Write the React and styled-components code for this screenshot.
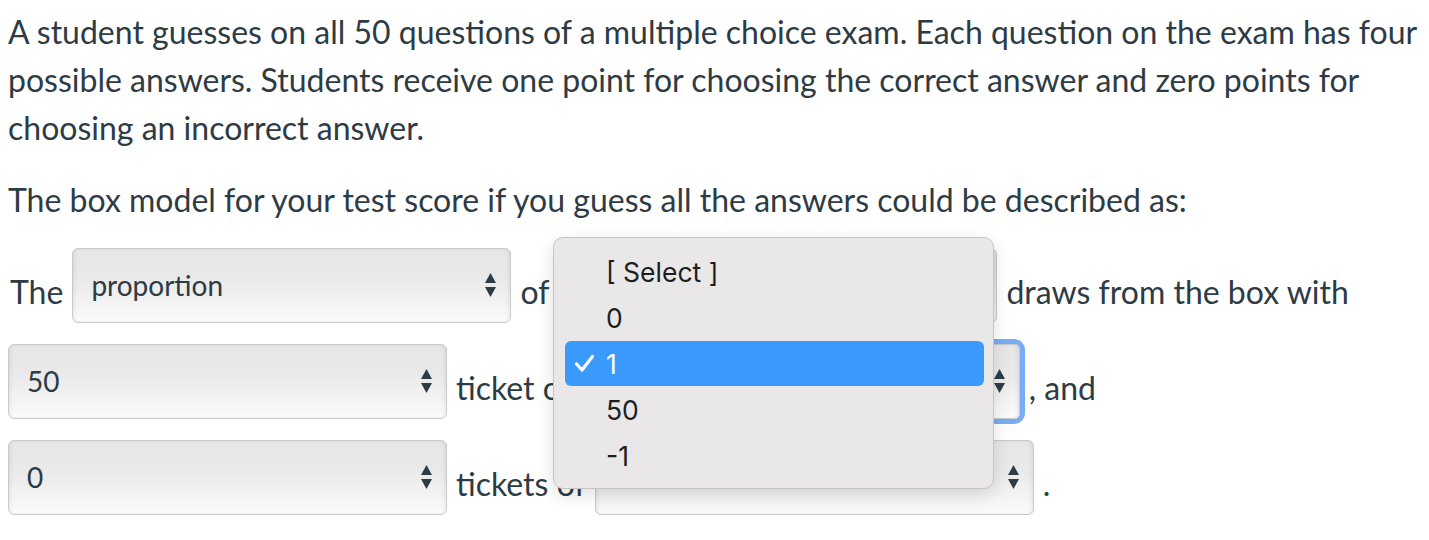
import React from 'react'
import styled, { createGlobalStyle } from 'styled-components'

const GlobalStyle = createGlobalStyle`
    body{
        margin: 8px;
        background: #ffffff;
        font-family: Lato, "Noto Sans", sans-serif;
        color: #2d3b45;
    }
`

const Question = styled.div`
    font-size: 32px;
    line-height: 48px;
    p{
        margin: 0 0 24px 0;
    }
`

const Form = styled.div`
    position: relative;
    display: flex;
    flex-direction: column;
    gap: 21px;
`

const Row = styled.div`
    display: flex;
    align-items: flex-start;
    gap: 9px;
    white-space: nowrap;
`

const Label = styled.span`
    padding-top: 20px;
    margin-left: ${props => props.$offset || 0}px;
`

const SelectBox = styled.div`
    position: relative;
    box-sizing: border-box;
    width: 439px;
    height: 75px;
    padding: 20px 40px 0 18px;
    border: 1px solid #c9c9c9;
    border-radius: 6px;
    background: linear-gradient(#e6e6e6, #eaeaea 45%, #fbfbfb);
    box-shadow: inset 3px 0 4px -2px rgba(0,0,0,0.08), inset -3px 0 4px -2px rgba(0,0,0,0.08);
    font-size: 28px;
    line-height: 32px;
    color: #2d3b45;
    flex-shrink: 0;
    ${props => props.$focused && `
        box-shadow: 0 0 0 5px rgba(96, 158, 245, 0.85), inset -3px 0 4px -2px rgba(0,0,0,0.08);
    `}
    svg{
        position: absolute;
        right: 14px;
        top: 24px;
    }
`

const Arrows = () => (
    <svg width="11" height="24" viewBox="0 0 11 24">
        <polygon points="0,10 5.5,0 11,10" fill="#2d3b45" />
        <polygon points="0,14 11,14 5.5,24" fill="#2d3b45" />
    </svg>
)

const Select = ({ value, focused }) => (
    <SelectBox $focused={focused}>
        {value}
        <Arrows />
    </SelectBox>
)

const Popup = styled.div`
    position: absolute;
    top: -11px;
    left: 545px;
    box-sizing: border-box;
    width: 441px;
    height: 252px;
    padding: 11px 9px 0 11px;
    background: #e9e7e8;
    border: 1px solid #c6c4c5;
    border-radius: 10px;
    box-shadow: 0 6px 18px rgba(0,0,0,0.12);
    font-family: Inter, "Liberation Sans", sans-serif;
    font-size: 26.5px;
    color: #1e1e1e;
`

const Item = styled.div`
    position: relative;
    height: 46px;
    line-height: 46px;
    padding-left: 41px;
    border-radius: 6px;
    ${props => props.$active && `
        background: #3a9afc;
        color: #ffffff;
        height: 45px;
        margin-bottom: 1px;
    `}
    svg{
        position: absolute;
        left: 9px;
        top: 13px;
    }
`

const Check = () => (
    <svg width="21" height="19" viewBox="0 0 21 19">
        <path d="M2.5 10 L8 16 L18.5 2.5" fill="none" stroke="#ffffff" strokeWidth="3.2" strokeLinecap="round" strokeLinejoin="round" />
    </svg>
)

const options = ['[ Select ]', '0', '1', '50', '-1']

const App = () => {
    return (
        <>
            <GlobalStyle />
            <Question>
                <p>A student guesses on all 50 questions of a multiple choice exam. Each question on the exam has four possible answers. Students receive one point for choosing the correct answer and zero points for choosing an incorrect answer.</p>
                <p>The box model for your test score if you guess all the answers could be described as:</p>
                <Form>
                    <Row>
                        <Label $offset={2}>The</Label>
                        <Select value="proportion" />
                        <Label>of</Label>
                        <Select value="" />
                        <Label>draws from the box with</Label>
                    </Row>
                    <Row>
                        <Select value="50" />
                        <Label>ticket of</Label>
                        <Select value="1" focused />
                        <Label>, and</Label>
                    </Row>
                    <Row>
                        <Select value="0" />
                        <Label>tickets of</Label>
                        <Select value="" />
                        <Label>.</Label>
                    </Row>
                    <Popup>
                        {options.map(o => (
                            <Item key={o} $active={o === '1'}>
                                {o === '1' && <Check />}
                                {o}
                            </Item>
                        ))}
                    </Popup>
                </Form>
            </Question>
        </>
    )
}

export default App
